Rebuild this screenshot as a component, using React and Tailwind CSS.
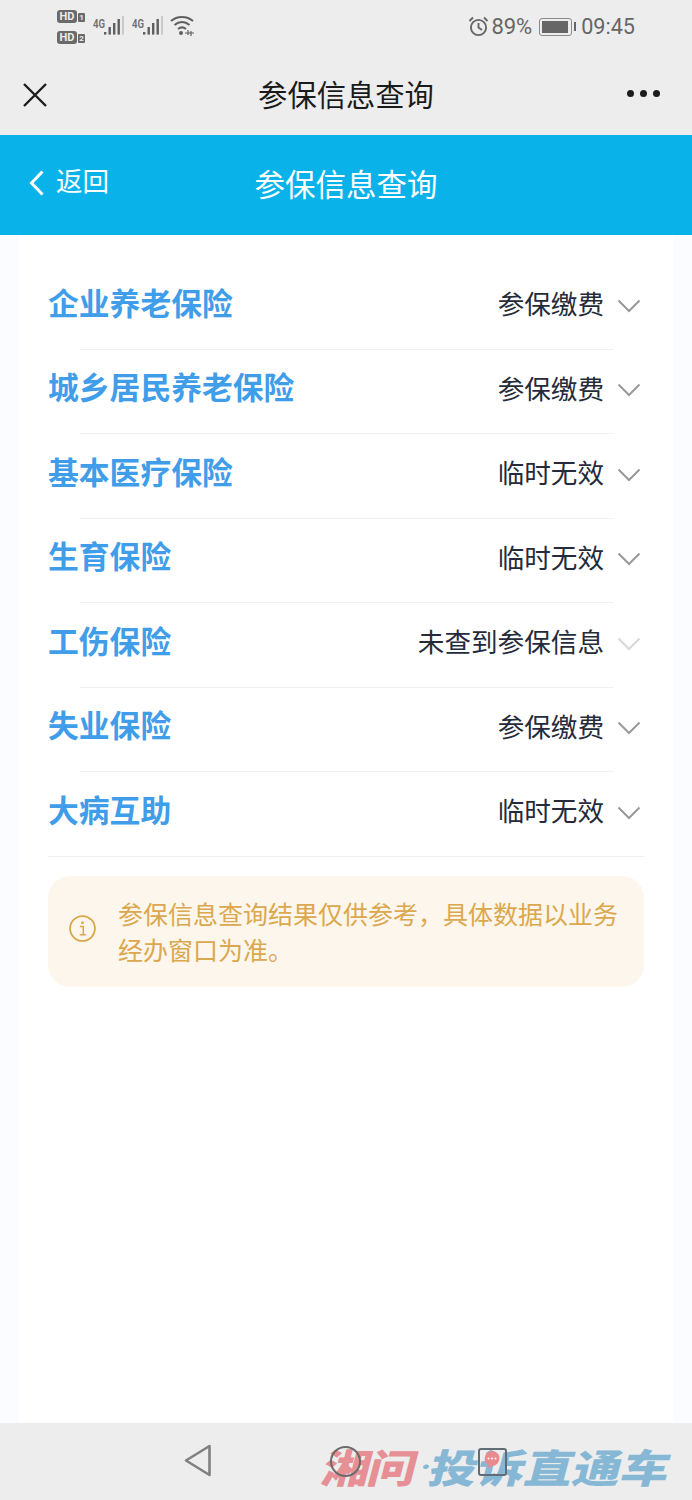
import React from "react";

const FONT = { fontFamily: '"Noto Sans CJK SC", "Noto Sans", sans-serif' };

const rows = [
  ["企业养老保险", "参保缴费", false],
  ["城乡居民养老保险", "参保缴费", false],
  ["基本医疗保险", "临时无效", false],
  ["生育保险", "临时无效", false],
  ["工伤保险", "未查到参保信息", true],
  ["失业保险", "参保缴费", false],
  ["大病互助", "临时无效", false],
];

function Chevron({ light }) {
  return (
    <svg width="24" height="14" viewBox="0 0 24 14" fill="none" className="shrink-0 mt-[5px]">
      <path d="M1.5 1.5 L12 12 L22.5 1.5" stroke={light ? "#d6d8da" : "#98999b"} strokeWidth="2" />
    </svg>
  );
}

function Signal() {
  return (
    <div className="flex items-start w-[32px]">
      <span className="text-[12px] leading-[12px] font-semibold text-[#6f6f6f] font-['Roboto'] scale-x-[0.8] origin-left w-[11px] mt-[3px]">4G</span>
      <svg width="21" height="22" viewBox="0 0 21 22">
        <rect x="0" y="17" width="2.4" height="2.6" fill="#5f5f5f" />
        <rect x="4.5" y="12" width="2.4" height="7.6" fill="#5f5f5f" />
        <rect x="9" y="8" width="2.4" height="11.6" fill="#5f5f5f" />
        <rect x="13.5" y="4" width="2.4" height="15.6" fill="#5f5f5f" />
        <rect x="18" y="1" width="2" height="18.6" fill="#c9c9c9" />
      </svg>
    </div>
  );
}

function Hd({ n }) {
  return (
    <div className="flex items-center gap-[1px] h-[14px]">
      <span className="w-[20px] h-[13px] rounded-[3px] bg-[#6a6a6a] text-[#ededed] text-[11px] leading-[13px] font-bold text-center font-['Roboto']">HD</span>
      <span className="w-[7px] h-[9px] rounded-[1px] bg-[#6a6a6a] text-[#ededed] text-[8px] leading-[9px] font-bold text-center font-['Roboto'] mt-[2px]">{n}</span>
    </div>
  );
}

export default function App() {
  return (
    <div className="relative w-[692px] h-[1500px] flex flex-col bg-white overflow-hidden" style={FONT}>
      {/* status bar */}
      <div className="h-[54px] bg-[#ededed] flex items-start justify-between pl-[57px] pr-[57px]">
        <div className="flex items-start">
          <div className="flex flex-col gap-[7px] mt-[9px]">
            <Hd n="1" />
            <Hd n="2" />
          </div>
          <div className="flex gap-[7px] ml-[8px] mt-[15px]">
            <Signal />
            <Signal />
          </div>
          <svg width="25" height="21" viewBox="0 0 25 21" fill="none" className="ml-[6px] mt-[15px]" stroke="#5f5f5f" strokeWidth="2">
            <path d="M1 6 C7 0.5 17 0.5 23 6" />
            <path d="M4.5 10 C9 6 15 6 19.5 10" />
            <path d="M8 14 C10.5 12 13.5 12 16 14" />
            <circle cx="11" cy="18" r="2" fill="#5f5f5f" stroke="none" />
            <path d="M15 18 H24 M18 15 V20 M21 16 V21" strokeWidth="1.2" />
          </svg>
        </div>
        <div className="flex items-center mt-[13px] h-[27px] text-[#666] font-['Roboto'] text-[22px] leading-[27px]">
          <svg width="21" height="21" viewBox="0 0 21 21" fill="none" stroke="#666" strokeWidth="1.9" className="mr-[2px]">
            <circle cx="10.5" cy="11.5" r="7.6" />
            <path d="M10.5 7 V11.5 L14 14" />
            <path d="M1.5 5 L5 1.5 M19.5 5 L16 1.5" />
          </svg>
          <span>89%</span>
          <div className="flex items-center ml-[7px] mr-[5px]">
            <div className="w-[33px] h-[18px] rounded-[3px] border border-[#8a8a8a] p-[2px]">
              <div className="w-[26px] h-full bg-[#666]"></div>
            </div>
            <div className="w-[2px] h-[9px] bg-[#666] ml-[2px]"></div>
          </div>
          <span className="text-[21.6px]">09:45</span>
        </div>
      </div>

      {/* nav bar */}
      <div className="h-[81px] bg-[#ededed] flex items-center justify-between pl-[23px] pr-[32px] relative">
        <svg width="24" height="24" viewBox="0 0 24 24" fill="none" stroke="#1c1c1c" strokeWidth="2.4">
          <path d="M1 1 L23 23 M23 1 L1 23" />
        </svg>
        <div className="absolute inset-x-0 top-[18px] text-center text-[29.3px] leading-[42px] text-[#1a1a1a]">参保信息查询</div>
        <div className="flex gap-[6px] mb-[2px]">
          <span className="w-[7px] h-[7px] rounded-full bg-[#1c1c1c]"></span>
          <span className="w-[7px] h-[7px] rounded-full bg-[#1c1c1c]"></span>
          <span className="w-[7px] h-[7px] rounded-full bg-[#1c1c1c]"></span>
        </div>
      </div>

      {/* blue header */}
      <div className="h-[100px] bg-[#09b3ea] relative flex items-center pl-[29px] text-white">
        <svg width="15" height="26" viewBox="0 0 15 26" fill="none" stroke="#fff" strokeWidth="3" className="mt-[-4px]">
          <path d="M13.5 1.5 L2.5 13 L13.5 24.5" />
        </svg>
        <span className="ml-[12px] text-[26.5px] leading-[38px] mt-[-10px]">返回</span>
        <div className="absolute inset-x-0 top-[26px] text-center text-[30.5px] leading-[44px]">参保信息查询</div>
      </div>

      {/* body */}
      <div className="flex-1 bg-[#fafcff] px-[19px] flex">
        <div className="flex-1 bg-white pt-[30px] px-[29px]">
          {rows.map(([title, value, light], i) => (
            <div key={title} className="relative h-[84.5px] flex items-center justify-between pr-[3px]">
              <span className="text-[30.8px] leading-[44px] font-bold text-[#3f9de9] mt-[-11px]">{title}</span>
              <div className="flex items-center gap-[13px] mt-[-8px]">
                <span className="text-[26.6px] leading-[38px] text-[#252b3a]">{value}</span>
                <Chevron light={light} />
              </div>
              {i < rows.length - 1 ? (
                <div className="absolute left-[32px] right-[30px] bottom-0 h-[1px] bg-[#f0f1f3]"></div>
              ) : (
                <div className="absolute left-0 right-0 bottom-0 h-[1px] bg-[#eff0f2]"></div>
              )}
            </div>
          ))}
          <div className="mt-[19px] h-[111px] rounded-[22px] bg-[#fdf6ec] flex items-center pl-[21px] pr-[20px]">
            <svg width="27" height="27" viewBox="0 0 27 27" fill="none" className="shrink-0 mt-[-6px]">
              <circle cx="13.5" cy="13.5" r="12.4" stroke="#d9a74a" strokeWidth="1.8" />
              <circle cx="13.5" cy="7.8" r="1.4" fill="#d9a74a" />
              <path d="M11 11.5 H14.3 V19.5 M10.8 19.8 H16.8" stroke="#d9a74a" strokeWidth="1.5" />
            </svg>
            <p className="ml-[22px] text-[25px] leading-[36px] text-[#dba84f]">
              参保信息查询结果仅供参考，具体数据以业务经办窗口为准。
            </p>
          </div>
        </div>
      </div>

      {/* bottom bar */}
      <div className="h-[77px] bg-[#ededed] relative flex items-center shrink-0">
        <div className="absolute left-[324px] top-[19px] text-[48px] leading-[48px] font-black -skew-x-12 scale-y-[0.82] whitespace-nowrap flex">
          <span className="text-[#e68f95] tracking-[-2px]">湘问</span>
          <span className="text-[#86b8d6] w-[15px] text-[20px] leading-[48px] text-center">·</span>
          <span className="text-[#86b8d6]">投诉直通车</span>
        </div>
        <svg width="28" height="34" viewBox="0 0 28 34" fill="none" className="absolute left-[184px] top-[21px]" stroke="#808080" strokeWidth="2.6" strokeLinejoin="round">
          <path d="M25.5 2 V31 L2 16.5 Z" />
        </svg>
        <div className="absolute left-[330px] top-[23px] w-[31px] h-[31px] rounded-full border-[2.5px] border-[#6b6b6b]"></div>
        <div className="absolute left-[478px] top-[25px] w-[29px] h-[28px] rounded-[3px] border-[2.5px] border-[#5f6d76]"></div>
        <svg width="16" height="18" viewBox="0 0 16 18" className="absolute left-[484px] top-[28px]">
          <path d="M8 0 A7.5 7.5 0 0 1 8 15 L4 17.5 L4.5 14 A7.5 7.5 0 0 1 8 0 Z" fill="#e88a8e" />
          <circle cx="4.5" cy="7.5" r="1" fill="#fff" />
          <circle cx="8" cy="7.5" r="1" fill="#fff" />
          <circle cx="11.5" cy="7.5" r="1" fill="#fff" />
        </svg>
      </div>
    </div>
  );
}
